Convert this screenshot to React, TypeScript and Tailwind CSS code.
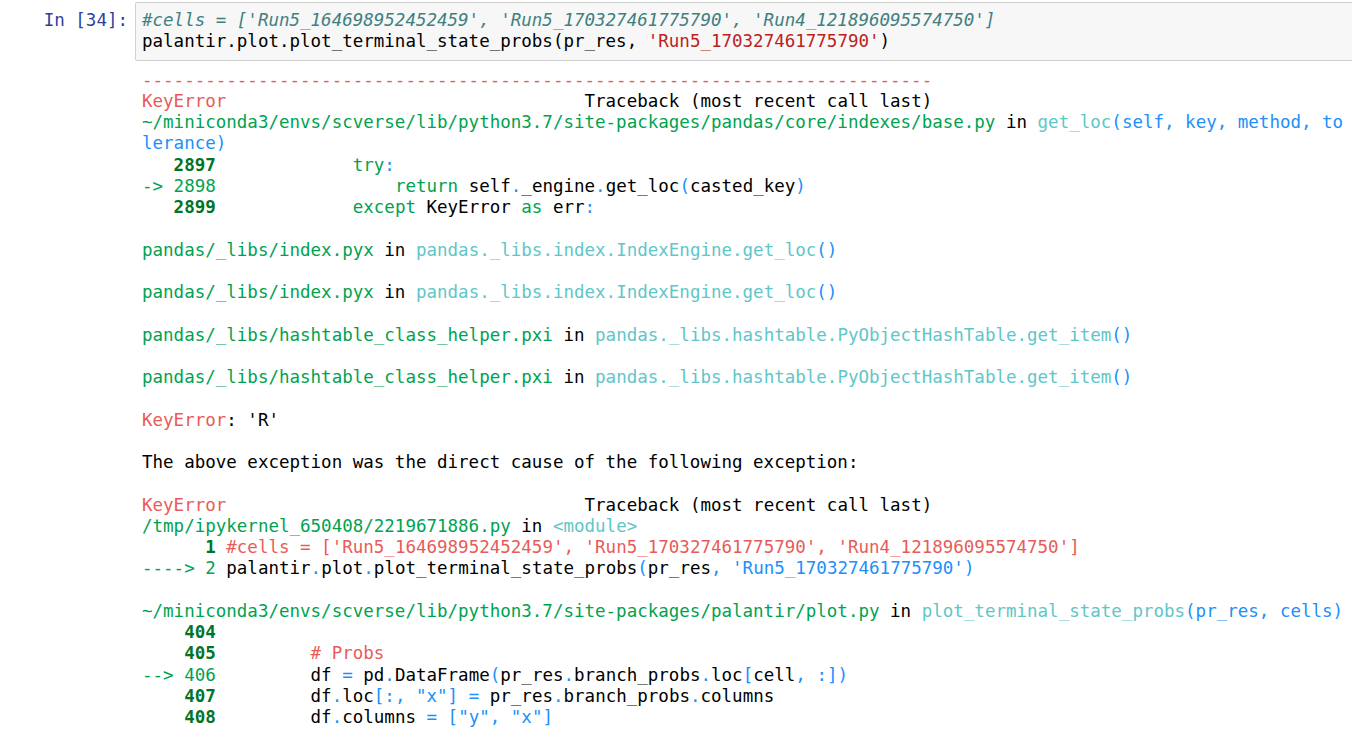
import React from "react";

// ansi colours used by the ipython traceback
const G = "text-[#00a250]";
const DG = "text-[#007427] font-bold";
const R = "text-[#e75c58]";
const C = "text-[#60c6c8]";
const B = "text-[#208ffb]";

type Seg = [string, string?];

const SITE = "~/miniconda3/envs/scverse/lib/python3.7/site-packages/";

const TRACE_HEAD: Seg[] = [["KeyError", R], [" ".repeat(34) + "Traceback (most recent call last)"]];

const OUTPUT: Seg[][] = [
  [["-".repeat(75), R]],
  TRACE_HEAD,
  [[SITE + "pandas/core/indexes/base.py", G], [" in "], ["get_loc", C], ["(self, key, method, to", B]],
  [["lerance)", B]],
  [["   "], ["2897", DG], [" ".repeat(13)], ["try", G], [":", B]],
  [["-> 2898", G], [" ".repeat(17)], ["return", G], [" self"], [".", B], ["_engine"], [".", B], ["get_loc"], ["(", B], ["casted_key"], [")", B]],
  [["   "], ["2899", DG], [" ".repeat(13)], ["except", G], [" KeyError "], ["as", G], [" err"], [":", B]],
  [],
  [["pandas/_libs/index.pyx", G], [" in "], ["pandas._libs.index.IndexEngine.get_loc", C], ["()", B]],
  [],
  [["pandas/_libs/index.pyx", G], [" in "], ["pandas._libs.index.IndexEngine.get_loc", C], ["()", B]],
  [],
  [["pandas/_libs/hashtable_class_helper.pxi", G], [" in "], ["pandas._libs.hashtable.PyObjectHashTable.get_item", C], ["()", B]],
  [],
  [["pandas/_libs/hashtable_class_helper.pxi", G], [" in "], ["pandas._libs.hashtable.PyObjectHashTable.get_item", C], ["()", B]],
  [],
  [["KeyError", R], [": 'R'"]],
  [],
  [["The above exception was the direct cause of the following exception:"]],
  [],
  TRACE_HEAD,
  [["/tmp/ipykernel_650408/2219671886.py", G], [" in "], ["<module>", C]],
  [["      "], ["1", DG], [" #cells = ['Run5_164698952452459', 'Run5_170327461775790', 'Run4_121896095574750']", R]],
  [["----> 2", G], [" palantir"], [".", B], ["plot"], [".", B], ["plot_terminal_state_probs"], ["(", B], ["pr_res"], [", 'Run5_170327461775790')", B]],
  [],
  [[SITE + "palantir/plot.py", G], [" in "], ["plot_terminal_state_probs", C], ["(pr_res, cells)", B]],
  [["    "], ["404", DG]],
  [["    "], ["405", DG], [" ".repeat(9)], ["# Probs", R]],
  [["--> 406", G], [" ".repeat(9) + "df "], ["=", B], [" pd"], [".", B], ["DataFrame"], ["(", B], ["pr_res"], [".", B], ["branch_probs"], [".", B], ["loc"], ["[", B], ["cell"], [", :])", B]],
  [["    "], ["407", DG], [" ".repeat(9) + "df"], [".", B], ["loc"], ['[:, "x"]', B], [" "], ["=", B], [" pr_res"], [".", B], ["branch_probs"], [".", B], ["columns"]],
  [["    "], ["408", DG], [" ".repeat(9) + "df"], [".", B], ["columns "], ["=", B], [" "], ['["y", "x"]', B]],
];

const Line = ({ segs }: { segs: Seg[] }) => (
  <div className="h-[21.25px] whitespace-pre">
    {segs.map(([text, cls], i) => (
      <span key={i} className={cls}>{text}</span>
    ))}
  </div>
);

const App = () => {
  return (
    <div className="min-h-screen overflow-hidden bg-white pt-[2px] font-['DejaVu_Sans_Mono',monospace] text-[17.5px] leading-[21.25px] text-black">
      <div className="flex">
        <div className="w-[135px] shrink-0 pr-[7px] pt-[8px] text-right text-[#303f9f]">In [34]:</div>
        <div className="w-[1240px] shrink-0 rounded-[2px] border border-[#cfcfcf] bg-[#f7f7f7] px-[6px] py-[7px]">
          <div className="whitespace-pre italic text-[#408080]">
            #cells = ['Run5_164698952452459', 'Run5_170327461775790', 'Run4_121896095574750']
          </div>
          <div className="whitespace-pre">
            palantir.plot.plot_terminal_state_probs(pr_res, <span className="text-[#ba2121]">'Run5_170327461775790'</span>)
          </div>
        </div>
      </div>

      <div className="pl-[142px] pt-[9px]">
        {OUTPUT.map((segs, i) => (
          <Line key={i} segs={segs} />
        ))}
      </div>
    </div>
  );
};

export default App;
